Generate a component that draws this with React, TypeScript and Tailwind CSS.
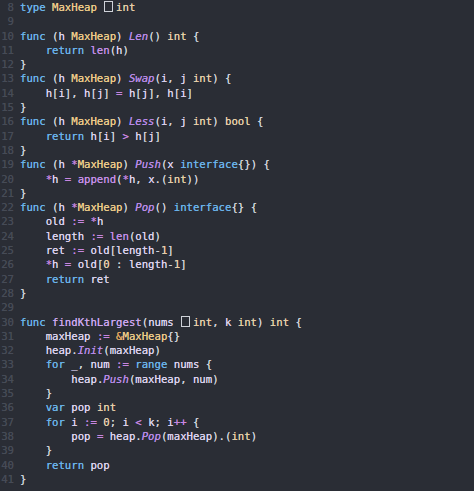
import React from "react";

const code = `type MaxHeap []int

func (h MaxHeap) Len() int {
    return len(h)
}
func (h MaxHeap) Swap(i, j int) {
    h[i], h[j] = h[j], h[i]
}
func (h MaxHeap) Less(i, j int) bool {
    return h[i] > h[j]
}
func (h *MaxHeap) Push(x interface{}) {
    *h = append(*h, x.(int))
}
func (h *MaxHeap) Pop() interface{} {
    old := *h
    length := len(old)
    ret := old[length-1]
    *h = old[0 : length-1]
    return ret
}

func findKthLargest(nums []int, k int) int {
    maxHeap := &MaxHeap{}
    heap.Init(maxHeap)
    for _, num := range nums {
        heap.Push(maxHeap, num)
    }
    var pop int
    for i := 0; i < k; i++ {
        pop = heap.Pop(maxHeap).(int)
    }
    return pop
}`;

const keywords = ["type", "func", "return", "for", "range", "var", "interface"];
const methods = ["Len", "Swap", "Less", "Push", "Pop", "Init"];

const colors = {
  kw: "text-[#6ab3ea]",
  type: "text-[#ecca88]",
  prim: "text-[#e6cfa8]",
  method: "text-[#b98ae8] italic",
  builtin: "text-[#c48de8]",
  fn: "text-[#cca6f0]",
  ident: "text-[#dcd2ee]",
  op: "text-[#c786e0]",
  amp: "text-[#e6a75e]",
  num: "text-[#e4cdaa]",
  punct: "text-[#cfd2d9]",
};

function classify(tok: string): string {
  if (keywords.includes(tok)) return colors.kw;
  if (tok === "MaxHeap") return colors.type;
  if (tok === "int" || tok === "bool") return colors.prim;
  if (methods.includes(tok)) return colors.method;
  if (tok === "len" || tok === "append") return colors.builtin;
  if (tok === "findKthLargest") return colors.fn;
  if (/^\d+$/.test(tok)) return colors.num;
  if (tok === "&") return colors.amp;
  if (/^(:=|=|>|<|\*|\+\+)$/.test(tok)) return colors.op;
  if (/^\w+$/.test(tok)) return colors.ident;
  return colors.punct;
}

function Line({ text }: { text: string }) {
  const toks = text.match(/\[\]|:=|\+\+|\w+|\s+|./g) ?? [];
  return (
    <>
      {toks.map((t, i) =>
        t === "[]" ? (
          // the editor draws "[]" as a missing-glyph box
          <span
            key={i}
            className="inline-block w-[9px] h-[11px] ml-[0.5px] mr-[3.3px] border border-[#cfd2d9] align-[-1px]"
          />
        ) : /^\s+$/.test(t) ? (
          <span key={i}>{t}</span>
        ) : (
          <span key={i} className={classify(t)}>
            {t}
          </span>
        )
      )}
    </>
  );
}

export default function App() {
  const lines = code.split("\n");

  return (
    <div className="w-[474px] h-[491px] overflow-hidden bg-[#2a2d35] pt-[1px] font-['DejaVu_Sans_Mono',monospace] text-[10.65px] leading-[14.3px] [text-shadow:0_0_0.4px_currentColor]">
      {lines.map((l, i) => (
        <div key={i} className="flex whitespace-pre">
          <span className="w-[14px] text-right text-[#464b56] shrink-0">{i + 8}</span>
          <span className="ml-[6px]">
            <Line text={l} />
          </span>
        </div>
      ))}
    </div>
  );
}
